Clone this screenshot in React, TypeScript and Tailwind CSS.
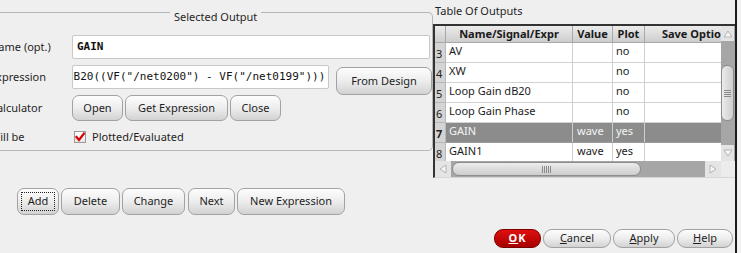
import React from "react";

const btn =
  "flex items-center justify-center border border-[#a2a2a2] bg-linear-to-b from-[#fdfdfd] via-[#ededed] to-[#d2d2d2] text-[#1e1e1e] whitespace-nowrap shrink-0";

function Btn({ className, children }: { className: string; children: React.ReactNode }) {
  return <div className={`${btn} ${className}`}>{children}</div>;
}

function ArrowBtn({ dir, className }: { dir: "up" | "down" | "left" | "right"; className: string }) {
  const pts: Record<string, string> = {
    up: "2,9 6,3 10,9",
    down: "2,3 6,9 10,3",
    left: "9,2 3,6 9,10",
    right: "3,2 9,6 3,10",
  };
  return (
    <div className={`flex items-center justify-center bg-[#e4e4e4] shrink-0 ${className}`}>
      <svg width="12" height="12" viewBox="0 0 12 12">
        <polygon points={pts[dir]} fill="#f6f6f6" stroke="#b4b4b4" strokeWidth="1" />
      </svg>
    </div>
  );
}

const rows = [
  { n: "3", name: "AV", value: "", plot: "no", sel: false },
  { n: "4", name: "XW", value: "", plot: "no", sel: false },
  { n: "5", name: "Loop Gain dB20", value: "", plot: "no", sel: false },
  { n: "6", name: "Loop Gain Phase", value: "", plot: "no", sel: false },
  { n: "7", name: "GAIN", value: "wave", plot: "yes", sel: true },
  { n: "8", name: "GAIN1", value: "wave", plot: "yes", sel: false },
];

function Table() {
  return (
    <div className="w-[302px] flex flex-col shrink-0">
      <div className="h-[24px] pl-[2px] pt-[3px] leading-[15px] text-[#1f1f1f]">Table Of Outputs</div>
      <div className="h-[154px] flex border-t-2 border-l-2 border-b border-t-[#333333] border-l-[#333333] border-b-[#d6d6d6]">
        <div className="w-[286px] flex flex-col shrink-0">
          <div className="h-[17px] flex overflow-hidden border-b border-[#a8a8a8] bg-linear-to-b from-[#ececec] to-[#cdcdcd] font-bold text-[#1a1a1a] leading-[16px]">
            <div className="w-[11px] shrink-0 border-r border-[#a8a8a8]" />
            <div className="w-[127px] shrink-0 border-r border-[#a8a8a8] text-center">Name/Signal/Expr</div>
            <div className="w-[40px] shrink-0 border-r border-[#a8a8a8] text-center">Value</div>
            <div className="w-[32px] shrink-0 border-r border-[#a8a8a8] text-center">Plot</div>
            <div className="w-[100px] shrink-0 text-center whitespace-nowrap">Save Option</div>
          </div>
          <div className="h-[118px] overflow-hidden bg-white">
            {rows.map((r) => (
              <div key={r.n} className="h-[20px] flex">
                <div
                  className={`w-[11px] shrink-0 bg-[#d4d4d4] border-r border-b border-[#b8b8b8] pl-[1px] pt-[3px] leading-[16px] text-[#222] ${
                    r.sel ? "font-bold" : ""
                  }`}
                >
                  {r.n}
                </div>
                <div
                  className={`flex flex-1 border-b ${
                    r.sel ? "bg-[#8c8c8c] text-[#f4f4f4] border-[#9c9c9c]" : "bg-white text-[#1c1c1c] border-[#d2d2d2]"
                  } leading-[16px]`}
                >
                  <div className="w-[127px] shrink-0 border-r border-[#cfcfcf] pl-[3px] whitespace-nowrap">{r.name}</div>
                  <div className="w-[40px] shrink-0 border-r border-[#cfcfcf] pl-[4px]">{r.value}</div>
                  <div className="w-[32px] shrink-0 border-r border-[#cfcfcf] pl-[3px]">{r.plot}</div>
                  <div className="flex-1" />
                </div>
              </div>
            ))}
          </div>
          <div className="h-[16px] flex bg-[#a6a6a6]">
            <ArrowBtn dir="left" className="w-[16px] h-[16px]" />
            <div className="ml-[1px] mt-[1px] w-[189px] h-[14px] rounded-[7px] border border-[#8c8c8c] bg-linear-to-b from-[#ececec] to-[#cdcdcd] flex items-center justify-center">
              <svg width="9" height="7" viewBox="0 0 9 7">
                <path d="M0.5 0v7M2.5 0v7M4.5 0v7M6.5 0v7M8.5 0v7" stroke="#8a8a8a" strokeWidth="1" />
              </svg>
            </div>
            <div className="flex-1" />
            <ArrowBtn dir="right" className="w-[16px] h-[16px]" />
          </div>
        </div>
        <div className="w-[14px] flex flex-col shrink-0">
          <div className="h-[135px] flex flex-col bg-[#a6a6a6]">
            <ArrowBtn dir="up" className="h-[15px] w-[13px]" />
            <div className="flex-1">
              <div className="mt-[24px] w-[13px] h-[56px] rounded-[6px] border border-[#8c8c8c] bg-linear-to-r from-[#ececec] to-[#cdcdcd] flex items-center justify-center">
                <svg width="7" height="7" viewBox="0 0 7 7">
                  <path d="M0 0.5h7M0 2.5h7M0 4.5h7M0 6.5h7" stroke="#8a8a8a" strokeWidth="1" />
                </svg>
              </div>
            </div>
            <ArrowBtn dir="down" className="h-[16px] w-[13px]" />
          </div>
          <div className="flex-1 bg-[#ececec]" />
        </div>
      </div>
    </div>
  );
}

function GroupBox() {
  return (
    <div className="relative mt-[12px] h-[139px] w-[433px] border-t border-r border-b border-[#b6b6b6] rounded-r-[5px] flex flex-col">
      <div className="absolute left-[170px] top-[-2px] px-[4px] bg-[#efefef] leading-[12px] text-[#1f1f1f]">
        Selected Output
      </div>
      <div className="mt-[22px] h-[24px] flex items-center">
        <div className="ml-[-10px] w-[82px] shrink-0 whitespace-nowrap">Name (opt.)</div>
        <div className="w-[358px] h-[24px] bg-white border border-[#c8c8c8] rounded-[2px] flex items-center pl-[4px] font-['DejaVu_Sans_Mono',monospace] font-bold text-[11px] text-[#111]">
          GAIN
        </div>
      </div>
      <div className="mt-[6px] h-[30px] flex items-start">
        <div className="ml-[-10px] w-[82px] h-[24px] shrink-0 whitespace-nowrap flex items-center">Expression</div>
        <div className="w-[257px] h-[24px] bg-white border border-[#c8c8c8] rounded-[2px] flex items-center overflow-hidden font-['DejaVu_Sans_Mono',monospace] text-[11px] text-[#111] whitespace-nowrap">
          <span className="ml-[-6px]">dB20((VF("/net0200") - VF("/net0199")))</span>
        </div>
        <Btn className="ml-[7px] mt-[2px] w-[96px] h-[28px] rounded-[7px]">From Design</Btn>
      </div>
      <div className="h-[26px] flex items-center">
        <div className="ml-[-10px] w-[82px] shrink-0 whitespace-nowrap">Calculator</div>
        <div className="flex gap-[2px]">
          <Btn className="w-[51px] h-[26px] rounded-[7px]">Open</Btn>
          <Btn className="w-[103px] h-[26px] rounded-[7px]">Get Expression</Btn>
          <Btn className="w-[51px] h-[26px] rounded-[7px]">Close</Btn>
        </div>
      </div>
      <div className="mt-[5px] h-[22px] flex items-center">
        <div className="ml-[-10px] w-[82px] shrink-0 whitespace-nowrap">Will be</div>
        <div className="ml-[2px] w-[12px] h-[12px] border border-[#9a9a9a] bg-linear-to-b from-[#ffffff] to-[#e6e6e6] flex items-center justify-center">
          <svg width="10" height="10" viewBox="0 0 10 10">
            <path d="M1.5 5 L4 8 L9 1.5" fill="none" stroke="#d80000" strokeWidth="2.2" strokeLinecap="square" />
          </svg>
        </div>
        <div className="ml-[6px]">Plotted/Evaluated</div>
      </div>
    </div>
  );
}

export default function App() {
  return (
    <div className="w-[741px] h-[253px] overflow-hidden bg-[#efefef] flex font-['Noto_Sans',sans-serif] text-[11px] text-[#1f1f1f]">
      <div className="w-[735px] flex flex-col shrink-0">
        <div className="h-[229px] flex">
          <div className="w-[433px] flex flex-col shrink-0">
            <GroupBox />
            <div className="mt-[37px] flex gap-[2px] pl-[17px]">
              <Btn className="w-[42px] h-[27px] rounded-[7px] relative">
                <div className="absolute inset-[3px] border border-dotted border-[#222]" />
                Add
              </Btn>
              <Btn className="w-[59px] h-[27px] rounded-[7px]">Delete</Btn>
              <Btn className="w-[63px] h-[27px] rounded-[7px]">Change</Btn>
              <Btn className="ml-[1px] w-[47px] h-[27px] rounded-[7px]">Next</Btn>
              <Btn className="w-[108px] h-[27px] rounded-[7px]">New Expression</Btn>
            </div>
          </div>
          <Table />
        </div>
        <div className="flex-1 flex justify-end gap-[2px] pr-[2px]">
          <div className="w-[47px] h-[19px] rounded-[9px] border border-[#7a0000] bg-linear-to-b from-[#e01010] to-[#a80000] text-white font-bold flex items-center justify-center tracking-[1px]">
            <span className="underline">O</span>K
          </div>
          <Btn className="w-[68px] h-[19px] rounded-[9px]">
            <span className="underline">C</span>ancel
          </Btn>
          <Btn className="w-[62px] h-[19px] rounded-[9px]">
            <span className="underline">A</span>pply
          </Btn>
          <Btn className="w-[56px] h-[19px] rounded-[9px]">
            <span className="underline">H</span>elp
          </Btn>
        </div>
      </div>
      <div className="w-[2px] bg-[#1c1c1c] shrink-0" />
      <div className="flex-1 bg-[#f3f3f3]" />
    </div>
  );
}
